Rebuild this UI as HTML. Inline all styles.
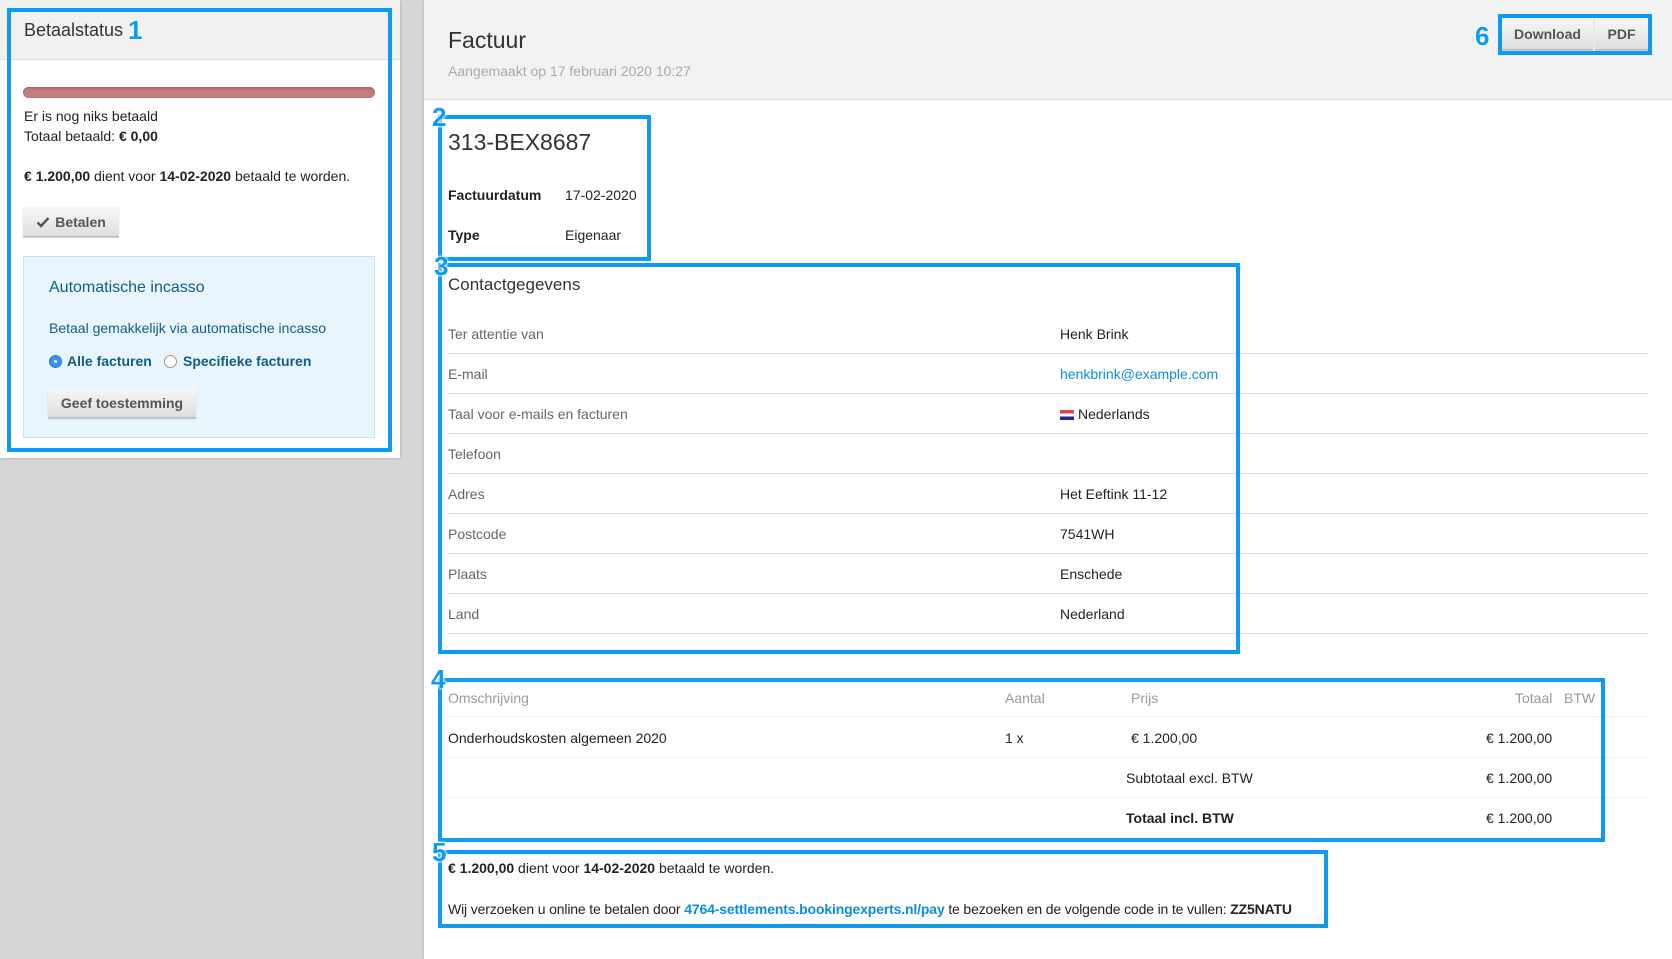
<!DOCTYPE html>
<html><head><meta charset="utf-8"><style>
*{margin:0;padding:0;box-sizing:border-box}
body{width:1672px;height:959px;position:relative;overflow:hidden;background:#d6d6d6;font-family:"Liberation Sans",Arial,sans-serif;font-size:14px;color:#222}
.a{position:absolute;white-space:nowrap}
.bl{position:absolute;border:4px solid #0d9bf2}
.n{position:absolute;color:#0d9bf2;font-weight:bold;font-size:26px;text-shadow:0 0 2px #fff,0 0 2px #fff,0 0 3px #fff;line-height:1}
.btn{position:absolute;background:linear-gradient(#f7f7f7,#dedede);border-bottom:1px solid #bbb;box-shadow:0 1px 1px rgba(0,0,0,.2);color:#555;font-weight:bold;font-size:14px;text-align:center}
.line{position:absolute;left:448px;width:1200px;height:1px;background:#ddd}
.g{color:#666}
b{font-weight:bold}
</style></head><body>
<div class="a" style="left:0;top:0;width:400px;height:458px;background:#fff;box-shadow:1px 1px 2px rgba(0,0,0,.15)"></div>
<div class="a" style="left:0;top:0;width:400px;height:60px;background:#f1f1f1;border-bottom:1px solid #ddd"></div>
<div class="a" style="left:24px;top:20px;font-size:18px;color:#333">Betaalstatus</div>
<div class="a" style="left:23px;top:87px;width:352px;height:11px;border-radius:6px;background:#c47b7b;box-shadow:inset 0 1px 2px rgba(0,0,0,.25)"></div>
<div class="a" style="left:24px;top:108px">Er is nog niks betaald</div>
<div class="a" style="left:24px;top:128px">Totaal betaald: <b>€ 0,00</b></div>
<div class="a" style="left:24px;top:168px"><b>€ 1.200,00</b> dient voor <b>14-02-2020</b> betaald te worden.</div>
<div class="btn" style="left:23px;top:207px;width:96px;height:30px;line-height:30px"><svg width="14" height="12" viewBox="0 0 14 12" style="vertical-align:-1px;margin-right:5px"><path d="M1.5 6.5 L5 10 L12.5 2" stroke="#555" stroke-width="2.4" fill="none"/></svg>Betalen</div>
<div class="a" style="left:23px;top:256px;width:352px;height:182px;background:#e8f5fd;border:1px solid #bfe3f8"></div>
<div class="a" style="left:49px;top:279px;font-size:16px;color:#115e85">Automatische incasso</div>
<div class="a" style="left:49px;top:320px;color:#115e85">Betaal gemakkelijk via automatische incasso</div>
<div class="a" style="left:49px;top:355px;width:13px;height:13px;border-radius:50%;background:#3b8ff0;border:1px solid #2a7ad8"><div style="position:absolute;left:4px;top:4px;width:3px;height:3px;border-radius:50%;background:#fff"></div></div>
<div class="a" style="left:67px;top:353px;color:#115e85;font-weight:bold">Alle facturen</div>
<div class="a" style="left:164px;top:355px;width:13px;height:13px;border-radius:50%;background:#fff;border:1px solid #999"></div>
<div class="a" style="left:183px;top:353px;color:#115e85;font-weight:bold">Specifieke facturen</div>
<div class="btn" style="left:48px;top:388px;width:148px;height:30px;line-height:30px">Geef toestemming</div>
<div class="bl" style="left:7px;top:8px;width:385px;height:444px"></div>
<div class="n" style="left:128px;top:17px">1</div>

<div class="a" style="left:424px;top:0;width:1248px;height:959px;background:#fff;box-shadow:-1px 0 2px rgba(0,0,0,.1)"></div>
<div class="a" style="left:424px;top:0;width:1248px;height:100px;background:#f2f2f2;border-bottom:1px solid #ddd"></div>
<div class="a" style="left:448px;top:27px;font-size:23px;color:#333">Factuur</div>
<div class="a" style="left:448px;top:63px;font-size:14px;color:#aaa">Aangemaakt op 17 februari 2020 10:27</div>
<div class="btn" style="left:1502px;top:19px;width:91px;height:31px;line-height:31px">Download</div>
<div class="btn" style="left:1595px;top:19px;width:53px;height:31px;line-height:31px">PDF</div>
<div class="bl" style="left:1498px;top:14px;width:154px;height:41px"></div>
<div class="n" style="left:1475px;top:23px">6</div>

<div class="a" style="left:448px;top:129px;font-size:23px;color:#333">313-BEX8687</div>
<div class="a" style="left:448px;top:187px;font-weight:bold">Factuurdatum</div>
<div class="a" style="left:565px;top:187px">17-02-2020</div>
<div class="a" style="left:448px;top:227px;font-weight:bold">Type</div>
<div class="a" style="left:565px;top:227px">Eigenaar</div>
<div class="bl" style="left:438px;top:115px;width:213px;height:146px"></div>
<div class="n" style="left:432px;top:104px">2</div>

<div class="a" style="left:448px;top:275px;font-size:17px;color:#333">Contactgegevens</div>
<div class="a g" style="left:448px;top:326px">Ter attentie van</div><div class="a" style="left:1060px;top:326px">Henk Brink</div>
<div class="line" style="top:353px"></div>
<div class="a g" style="left:448px;top:366px">E-mail</div><div class="a" style="left:1060px;top:366px;color:#0b8fd8">henkbrink@example.com</div>
<div class="line" style="top:393px"></div>
<div class="a g" style="left:448px;top:406px">Taal voor e-mails en facturen</div>
<div class="a" style="left:1060px;top:410px;width:14px;height:10px;background:linear-gradient(#e8404a 33%,#fff 33%,#fff 66%,#1d2a8a 66%)"></div>
<div class="a" style="left:1078px;top:406px">Nederlands</div>
<div class="line" style="top:433px"></div>
<div class="a g" style="left:448px;top:446px">Telefoon</div>
<div class="line" style="top:473px"></div>
<div class="a g" style="left:448px;top:486px">Adres</div><div class="a" style="left:1060px;top:486px">Het Eeftink 11-12</div>
<div class="line" style="top:513px"></div>
<div class="a g" style="left:448px;top:526px">Postcode</div><div class="a" style="left:1060px;top:526px">7541WH</div>
<div class="line" style="top:553px"></div>
<div class="a g" style="left:448px;top:566px">Plaats</div><div class="a" style="left:1060px;top:566px">Enschede</div>
<div class="line" style="top:593px"></div>
<div class="a g" style="left:448px;top:606px">Land</div><div class="a" style="left:1060px;top:606px">Nederland</div>
<div class="line" style="top:633px"></div>
<div class="bl" style="left:438px;top:263px;width:802px;height:391px"></div>
<div class="n" style="left:434px;top:253px">3</div>

<div class="a" style="left:448px;top:690px;color:#999">Omschrijving</div>
<div class="a" style="left:1005px;top:690px;color:#999">Aantal</div>
<div class="a" style="left:1131px;top:690px;color:#999">Prijs</div>
<div class="a" style="left:1515px;top:690px;color:#999">Totaal</div>
<div class="a" style="left:1564px;top:690px;color:#999">BTW</div>
<div class="line" style="top:716px;background:#eee"></div>
<div class="a" style="left:448px;top:730px">Onderhoudskosten algemeen 2020</div>
<div class="a" style="left:1005px;top:730px">1 x</div>
<div class="a" style="left:1131px;top:730px">€ 1.200,00</div>
<div class="a" style="left:1486px;top:730px">€ 1.200,00</div>
<div class="line" style="top:757px;background:#eee"></div>
<div class="a" style="left:1126px;top:770px">Subtotaal excl. BTW</div>
<div class="a" style="left:1486px;top:770px">€ 1.200,00</div>
<div class="line" style="top:797px;background:#eee"></div>
<div class="a" style="left:1126px;top:810px;font-weight:bold">Totaal incl. BTW</div>
<div class="a" style="left:1486px;top:810px">€ 1.200,00</div>
<div class="bl" style="left:438px;top:678px;width:1167px;height:164px"></div>
<div class="n" style="left:431px;top:666px">4</div>

<div class="a" style="left:448px;top:860px"><b>€ 1.200,00</b> dient voor <b>14-02-2020</b> betaald te worden.</div>
<div class="a" style="left:448px;top:901px;letter-spacing:-0.15px">Wij verzoeken u online te betalen door <b style="color:#0b8fd8">4764-settlements.bookingexperts.nl/pay</b> te bezoeken en de volgende code in te vullen: <b>ZZ5NATU</b></div>
<div class="bl" style="left:438px;top:850px;width:890px;height:78px"></div>
<div class="n" style="left:432px;top:839px">5</div>
</body></html>
